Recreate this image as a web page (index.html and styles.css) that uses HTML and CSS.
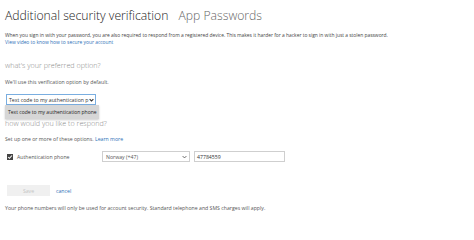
FILE: index.html
```html
<!DOCTYPE html>
<html>
<head>
<meta charset="utf-8">
<link rel="stylesheet" href="styles.css">
</head>
<body>
<div class="page">
  <div class="tabs">
    <span class="tab active">Additional security verification</span>
    <span class="tab">App Passwords</span>
  </div>
  <p class="intro">When you sign in with your password, you are also required to respond from a registered device. This makes it harder for a hacker to sign in with just a stolen password.<br><a class="link" href="#">View video to know how to secure your account</a></p>

  <h2 class="section first">what's your preferred option?</h2>
  <p class="small s1">We'll use this verification option by default.</p>
  <div class="pref">
    <div class="select pref-select"><span class="sel-text">Text code to my authentication p</span><svg class="chev" viewBox="0 0 8 6" width="5" height="4"><path d="M1 1.5 L4 4.5 L7 1.5" fill="none" stroke="#333" stroke-width="1.7"/></svg></div>
    <div class="menu">Text code to my authentication phone</div>
  </div>
  <h2 class="section respond">how would you like to respond?</h2>
  <p class="small s2">Set up one or more of these options. <a class="link" href="#">Learn more</a></p>

  <div class="row">
    <div class="check-label"><span class="checkbox"><svg viewBox="0 0 8 8" width="6" height="6"><path d="M1.5 4 L3.3 5.8 L6.6 2" fill="none" stroke="#fff" stroke-width="1.4"/></svg></span><span>Authentication phone</span></div>
    <div class="select country"><span class="sel-text">Norway (+47)</span><svg class="chev" viewBox="0 0 8 6" width="5" height="4"><path d="M1 1.5 L4 4.5 L7 1.5" fill="none" stroke="#555" stroke-width="1.4"/></svg></div>
    <div class="input">47784559</div>
  </div>

  <div class="actions">
    <span class="btn">Save</span>
    <a class="link cancel" href="#">cancel</a>
  </div>
  <p class="small footer">Your phone numbers will only be used for account security. Standard telephone and SMS charges will apply.</p>
</div>
</body>
</html>
```

FILE: styles.css
```css
html, body {
  margin: 0;
  padding: 0;
  background: #fff;
}
.page {
  font-family: "Open Sans", "Segoe UI", sans-serif;
  color: #444;
  padding: 7px 5px 0 5px;
}
.tabs {
  display: flex;
  gap: 10px;
  align-items: baseline;
  font-weight: 300;
  font-size: 12.2px;
  line-height: 18px;
}
.tab { color: #666; }
.tab.active { color: #222; }
.intro {
  margin: 7px 0 0 0;
  font-size: 4.9px;
  line-height: 7px;
  color: #444;
}
.link {
  color: #2e6fb7;
  text-decoration: none;
}
.section {
  margin: 0;
  font-size: 7.2px;
  font-weight: 300;
  line-height: 10px;
  color: #8a8a8a;
}
.section.first { margin-top: 14px; }
.small {
  margin: 0;
  font-size: 5.2px;
  line-height: 7px;
  color: #555;
}
.s1 { margin-top: 9px; }
.s2 { margin-top: 8px; }
.pref {
  margin-top: 8px;
  position: relative;
  height: 11px;
}
.select {
  box-sizing: border-box;
  display: flex;
  align-items: center;
  justify-content: space-between;
  gap: 1px;
  border: 1px solid #cfcfcf;
  background: #fff;
  font-size: 5.2px;
  color: #333;
  height: 11px;
  padding: 0 2px 0 2px;
  white-space: nowrap;
}
.pref-select {
  width: 90px;
  margin-left: 1px;
  border-color: #7aaee0;
}
.chev { flex: none; }
.menu {
  position: absolute;
  left: 0;
  top: 11px;
  width: 94px;
  height: 14px;
  box-sizing: border-box;
  background: #d6d6d6;
  font-size: 5px;
  line-height: 7px;
  color: #222;
  padding: 4px 0 0 3px;
  white-space: nowrap;
  box-shadow: 0 1px 2px rgba(0,0,0,0.2);
  z-index: 2;
}
.respond {
  margin-top: 13px;
}
.row {
  margin-top: 8px;
  display: flex;
  align-items: center;
  font-size: 5.2px;
  color: #555;
}
.check-label {
  width: 95px;
  display: flex;
  align-items: center;
  gap: 4px;
  padding-left: 2px;
}
.checkbox {
  width: 6px;
  height: 6px;
  background: #444;
  display: inline-flex;
  flex: none;
}
.country {
  width: 88px;
  color: #555;
  padding-left: 3px;
}
.input {
  box-sizing: border-box;
  margin-left: 4px;
  width: 91px;
  height: 11px;
  border: 1px solid #cfcfcf;
  padding: 0 2px;
  display: flex;
  align-items: center;
  color: #333;
}
.actions {
  margin-top: 23px;
  display: flex;
  align-items: center;
  gap: 6px;
  padding-left: 2px;
}
.btn {
  width: 43px;
  height: 11px;
  background: #f0f0f0;
  color: #c4c4c4;
  font-size: 5.2px;
  display: flex;
  align-items: center;
  justify-content: center;
}
.cancel {
  font-size: 5.2px;
}
.footer {
  margin-top: 9px;
}
```
